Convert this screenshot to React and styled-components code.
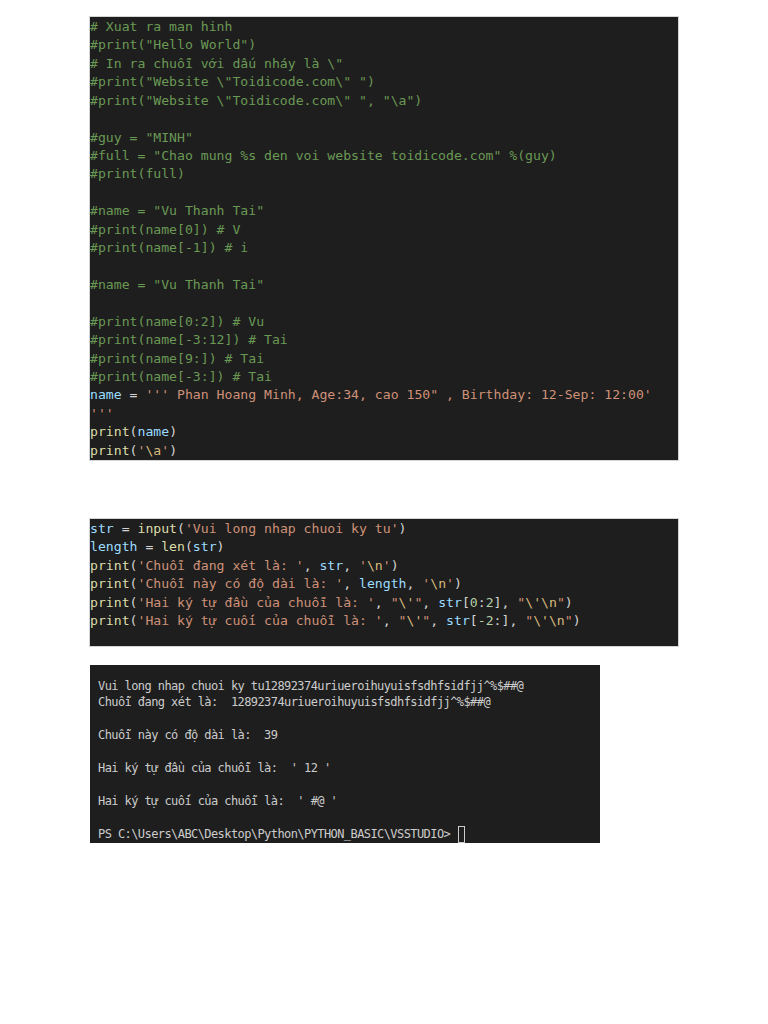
import React from "react";
import styled, { createGlobalStyle } from "styled-components";

const GlobalStyle = createGlobalStyle`
  html, body {
    margin: 0;
    padding: 0;
    background: #ffffff;
  }
  body {
    font-family: "DejaVu Sans Mono", monospace;
  }
`;

const COLORS = {
  comment: "#6A9955",
  string: "#CE9178",
  variable: "#9CDCFE",
  func: "#DCDCAA",
  plain: "#D4D4D4",
  number: "#B5CEA8",
  escape: "#D7BA7D",
};

const Page = styled.div`
  display: flex;
  flex-direction: column;
  align-items: flex-start;
  padding: 17px 0 0 90px;
`;

const Editor = styled.div`
  box-sizing: border-box;
  width: 588px;
  margin-top: ${(p) => p.$gap || 0}px;
  padding: 1px 0 ${(p) => p.$bottom || 0}px 0;
  background: #1e1e1e;
  box-shadow: 0 0 0 1px #d4d4d4;
  font-family: "DejaVu Sans Mono", monospace;
  font-size: 13.15px;
  line-height: 18.42px;
`;

const CodeLine = styled.div`
  white-space: pre;
  min-height: 18.42px;
  color: ${COLORS.plain};
`;

const Tok = styled.span`
  color: ${(p) => COLORS[p.$k] || COLORS.plain};
`;

const Terminal = styled.div`
  box-sizing: border-box;
  width: 510px;
  height: 178px;
  margin-top: ${(p) => p.$gap || 0}px;
  padding: 13px 0 0 8px;
  background: #1e1e1e;
  font-family: "DejaVu Sans Mono", monospace;
  font-size: 12px;
  letter-spacing: -0.58px;
  line-height: 16.44px;
  color: #cccccc;
`;

const TermLine = styled.div`
  white-space: pre;
  min-height: 16.44px;
  display: flex;
  align-items: center;
`;

const Cursor = styled.span`
  display: inline-block;
  box-sizing: border-box;
  width: 7px;
  height: 17px;
  border: 1px solid #cccccc;
  margin-left: 1px;
`;

const c = (t) => ["comment", t];
const s = (t) => ["string", t];
const v = (t) => ["variable", t];
const f = (t) => ["func", t];
const d = (t) => ["plain", t];
const n = (t) => ["number", t];
const e = (t) => ["escape", t];

const block1 = [
  [c("# Xuat ra man hinh")],
  [c('#print("Hello World")')],
  [c('# In ra chuỗi với dấu nháy là \\"')],
  [c('#print("Website \\"Toidicode.com\\" ")')],
  [c('#print("Website \\"Toidicode.com\\" ", "\\a")')],
  [],
  [c('#guy = "MINH"')],
  [c('#full = "Chao mung %s den voi website toidicode.com" %(guy)')],
  [c("#print(full)")],
  [],
  [c('#name = "Vu Thanh Tai"')],
  [c("#print(name[0]) # V")],
  [c("#print(name[-1]) # i")],
  [],
  [c('#name = "Vu Thanh Tai"')],
  [],
  [c("#print(name[0:2]) # Vu")],
  [c("#print(name[-3:12]) # Tai")],
  [c("#print(name[9:]) # Tai")],
  [c("#print(name[-3:]) # Tai")],
  [
    v("name"),
    d(" = "),
    s(`''' Phan Hoang Minh, Age:34, cao 150" , Birthday: 12-Sep: 12:00'`),
  ],
  [s("'''")],
  [f("print"), d("("), v("name"), d(")")],
  [f("print"), d("("), s("'"), e("\\a"), s("'"), d(")")],
];

const block2 = [
  [v("str"), d(" = "), f("input"), d("("), s("'Vui long nhap chuoi ky tu'"), d(")")],
  [v("length"), d(" = "), f("len"), d("("), v("str"), d(")")],
  [
    f("print"), d("("), s("'Chuỗi đang xét là: '"), d(", "), v("str"), d(", "),
    s("'"), e("\\n"), s("'"), d(")"),
  ],
  [
    f("print"), d("("), s("'Chuỗi này có độ dài là: '"), d(", "), v("length"), d(", "),
    s("'"), e("\\n"), s("'"), d(")"),
  ],
  [
    f("print"), d("("), s("'Hai ký tự đầu của chuỗi là: '"), d(", "),
    s('"'), e("\\'"), s('"'), d(", "),
    v("str"), d("["), n("0"), d(":"), n("2"), d("]"), d(", "),
    s('"'), e("\\'\\n"), s('"'), d(")"),
  ],
  [
    f("print"), d("("), s("'Hai ký tự cuối của chuỗi là: '"), d(", "),
    s('"'), e("\\'"), s('"'), d(", "),
    v("str"), d("["), n("-2"), d(":]"), d(", "),
    s('"'), e("\\'\\n"), s('"'), d(")"),
  ],
];

const terminalLines = [
  "Vui long nhap chuoi ky tu12892374uriueroihuyuisfsdhfsidfjj^%$##@",
  "Chuỗi đang xét là:  12892374uriueroihuyuisfsdhfsidfjj^%$##@",
  "",
  "Chuỗi này có độ dài là:  39",
  "",
  "Hai ký tự đầu của chuỗi là:  ' 12 '",
  "",
  "Hai ký tự cuối của chuỗi là:  ' #@ '",
  "",
];

function CodeBlock({ lines, gap, bottom }) {
  return (
    <Editor $gap={gap} $bottom={bottom}>
      {lines.map((tokens, i) => (
        <CodeLine key={i}>
          {tokens.map(([k, t], j) => (
            <Tok key={j} $k={k}>
              {t}
            </Tok>
          ))}
        </CodeLine>
      ))}
    </Editor>
  );
}

export default function App() {
  return (
    <>
      <GlobalStyle />
      <Page>
        <CodeBlock lines={block1} />
        <CodeBlock lines={block2} gap={59} bottom={15} />
        <Terminal $gap={19}>
          {terminalLines.map((t, i) => (
            <TermLine key={i}>{t}</TermLine>
          ))}
          <TermLine>
            {"PS C:\\Users\\ABC\\Desktop\\Python\\PYTHON_BASIC\\VSSTUDIO> "}
            <Cursor />
          </TermLine>
        </Terminal>
      </Page>
    </>
  );
}
